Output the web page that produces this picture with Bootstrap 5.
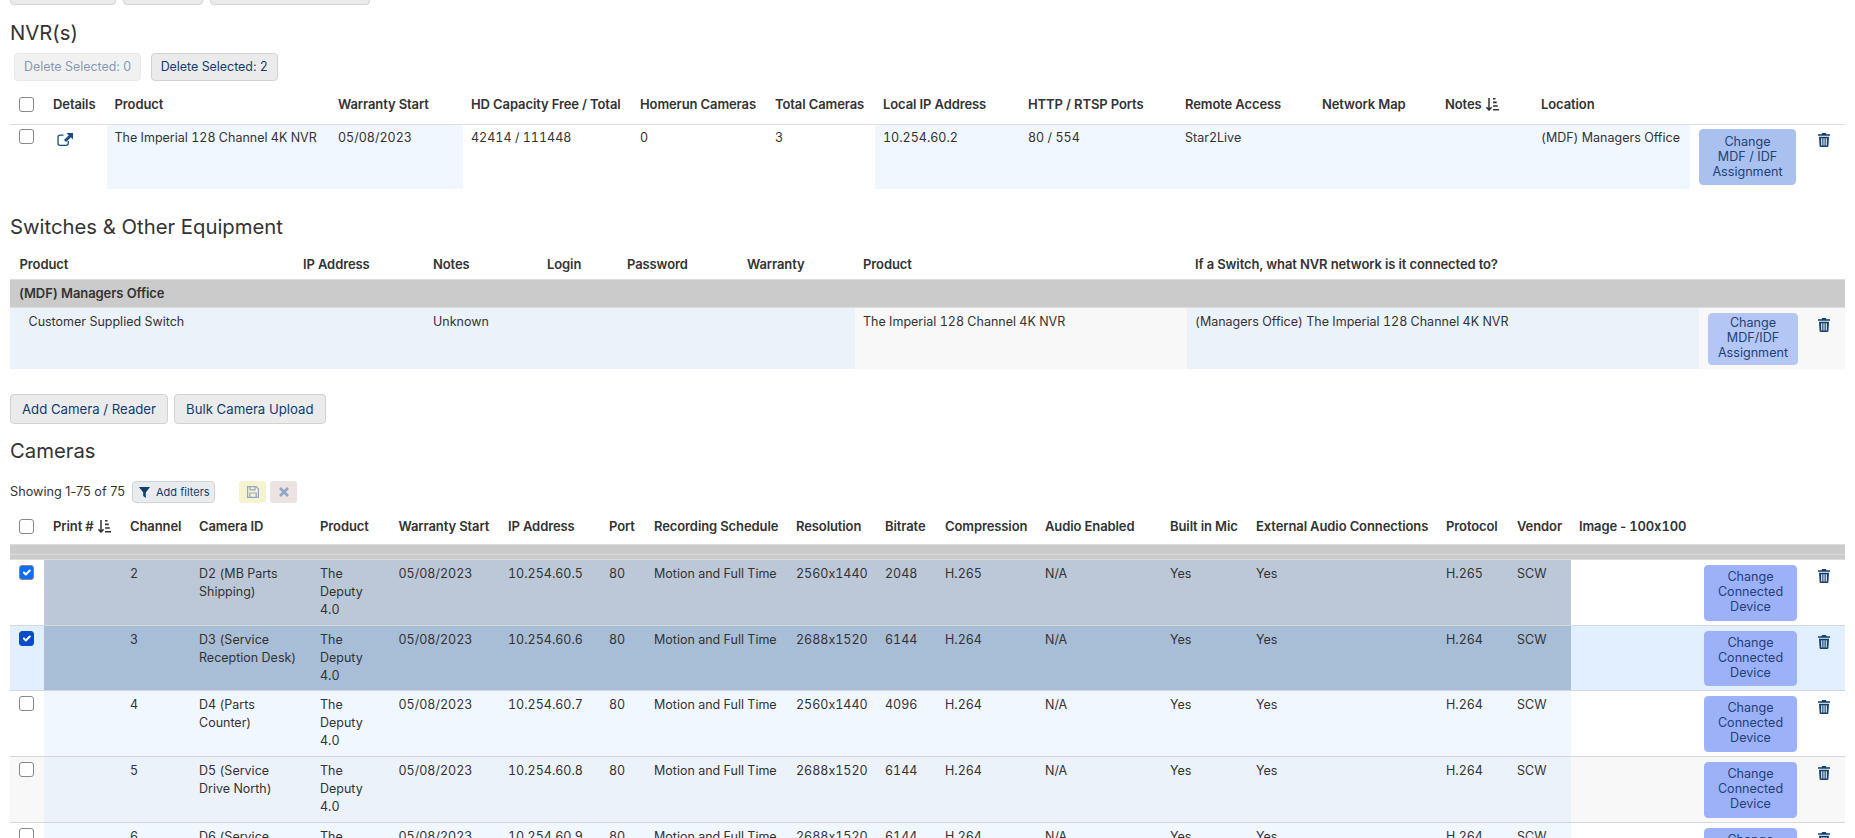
<!DOCTYPE html>
<html lang="en">
<head>
<meta charset="utf-8">
<title>Site equipment</title>
<link href="https://cdn.jsdelivr.net/npm/bootstrap@5.3.0/dist/css/bootstrap.min.css" rel="stylesheet">
<style>
html,body{height:838px;overflow:hidden;background:#fff}
body{font-family:Inter,"Liberation Sans",sans-serif;font-size:12.7px;color:#333;font-feature-settings:"calt" 0}
.page-wrap{padding:0 10px;margin-top:-25.5px}
.sec-title{font-size:20.3px;line-height:24px;font-weight:400;color:#333;margin:0}
.sec-nvr{margin-top:16.5px}
.sec-switch{margin-top:26px;margin-bottom:12px}
.sec-cam{margin-top:15px}
.top-bar{height:30px;gap:7px}
.act-btn{--bs-btn-bg:#ebebeb;--bs-btn-border-color:#d2d2d2;--bs-btn-color:#113c72;--bs-btn-hover-bg:#e2e2e2;--bs-btn-hover-color:#113c72;--bs-btn-hover-border-color:#c6c6c6;--bs-btn-disabled-bg:#ebebeb;--bs-btn-disabled-border-color:#dcdcdc;--bs-btn-disabled-color:#3f6390;--bs-btn-border-radius:4px;--bs-btn-font-size:13.2px;--bs-btn-padding-x:11px;--bs-btn-padding-y:0;--bs-btn-line-height:28px;white-space:nowrap}
.w-a{width:106px}.w-b{width:80px}.w-c{width:160px}
.del-bar{margin:8px 0 5px 4px;gap:9.5px}
.del-bar .act-btn{--bs-btn-font-size:12.4px;--bs-btn-padding-x:9px;--bs-btn-line-height:26px}
.add-bar{margin-top:25px;gap:6px}
.show-bar{margin-top:18px;margin-bottom:5px;height:22px}
.filter-btn{--bs-btn-font-size:11px;--bs-btn-line-height:20px;--bs-btn-padding-x:6px;--bs-btn-bg:#e9ecef;--bs-btn-border-color:#cfd3d8;margin-left:7px;width:83px;display:flex;align-items:center;gap:6px}
.filter-btn svg{flex:none}
.tool-sq{width:27px;height:22px;border-radius:3px;display:flex;align-items:center;justify-content:center}
.sq-save{background:#f6f3d0;margin-left:24px}
.sq-cancel{background:#eee3e3;margin-left:4px}
.eq-table{table-layout:fixed;width:1835px;margin:0;--bs-table-color:#333;--bs-table-bg:transparent;--bs-table-border-color:#d4d8dd;font-size:12.5px;line-height:18px}
.eq-table tbody{font-variant-numeric:tabular-nums}
.eq-table.table>:not(caption)>*>*{padding:5px 8px 4px;border-bottom-width:1px;vertical-align:top}
.eq-table.nvr-table.table>tbody>tr>td{padding-top:4px;padding-bottom:5px}
.eq-table.table>thead>tr>th{font-size:13px;letter-spacing:-.1px;font-weight:600;padding:0 8px 2px;vertical-align:middle;white-space:nowrap;border-bottom:1px solid #dcdcdc}
.eq-table.table>thead>tr.head-36>th{height:36px;padding-bottom:0}
.eq-table.table>thead>tr>.img-th{font-variant-numeric:tabular-nums;word-spacing:-1.5px}
.head-38 th{height:38px}
.head-28 th{height:29px}
.eq-table .form-check-input{width:15px;height:15px;margin:0 0 0 1px;display:block;border-color:#888;border-radius:3px}
.eq-table thead .form-check-input{margin-top:1px}
.chk-dark.form-check-input:checked{background-color:#0b4dc8;border-color:#0b4dc8}
.nvr-cols col:nth-child(1){width:35px}.nvr-cols col:nth-child(2){width:61.5px}.nvr-cols col:nth-child(3){width:223.5px}.nvr-cols col:nth-child(4){width:133px}.nvr-cols col:nth-child(5){width:169px}.nvr-cols col:nth-child(6){width:135px}.nvr-cols col:nth-child(7){width:108px}.nvr-cols col:nth-child(8){width:145px}.nvr-cols col:nth-child(9){width:157px}.nvr-cols col:nth-child(10){width:137px}.nvr-cols col:nth-child(11){width:123px}.nvr-cols col:nth-child(12){width:96px}.nvr-cols col:nth-child(13){width:157px}.nvr-cols col:nth-child(14){width:115px}.nvr-cols col:nth-child(15){width:40px}
.sw-cols col:nth-child(1){width:285px}.sw-cols col:nth-child(2){width:130px}.sw-cols col:nth-child(3){width:114px}.sw-cols col:nth-child(4){width:80px}.sw-cols col:nth-child(5){width:120px}.sw-cols col:nth-child(6){width:116px}.sw-cols col:nth-child(7){width:332px}.sw-cols col:nth-child(8){width:512px}.sw-cols col:nth-child(9){width:106px}.sw-cols col:nth-child(10){width:40px}
.cam-cols col:nth-child(1){width:34px}.cam-cols col:nth-child(2){width:78px}.cam-cols col:nth-child(3){width:69px}.cam-cols col:nth-child(4){width:121px}.cam-cols col:nth-child(5){width:78.5px}.cam-cols col:nth-child(6){width:109.5px}.cam-cols col:nth-child(7){width:101px}.cam-cols col:nth-child(8){width:45px}.cam-cols col:nth-child(9){width:142px}.cam-cols col:nth-child(10){width:89px}.cam-cols col:nth-child(11){width:60px}.cam-cols col:nth-child(12){width:100px}.cam-cols col:nth-child(13){width:125px}.cam-cols col:nth-child(14){width:86px}.cam-cols col:nth-child(15){width:190px}.cam-cols col:nth-child(16){width:71px}.cam-cols col:nth-child(17){width:62px}.cam-cols col:nth-child(18){width:124px}.cam-cols col:nth-child(19){width:110px}.cam-cols col:nth-child(20){width:40px}
.bg-tint{--bs-table-bg:#f1f7fe}
.bg-band{--bs-table-bg:#ebf2fa}
.bg-odd{--bs-table-bg:#f8f8f8}
.bg-sel1{--bs-table-bg:#bcc8d7}
.bg-sel2{--bs-table-bg:#a8bdd6}
.bg-hov{--bs-table-bg:#e1effe}
.bg-group{--bs-table-bg:#cbcbcb}
.eq-table.table>tbody>tr>.group-cell{font-size:13px;letter-spacing:-.1px;font-weight:600;padding:4px 8px 5px 9px;border-bottom-color:#dcdcdc}
.eq-table.table>tbody>tr>.spacer-a{padding:0;height:10px;font-size:0;line-height:0;border-bottom-color:#dcdcdc}
.eq-table.table>tbody>tr>.spacer-b{padding:0;height:5px;font-size:0;line-height:0;border-bottom-color:#dcdcdc}
.eq-table.table>tbody>.no-line>td{border-bottom-width:0}
.eq-table.table>thead>tr>.lead-th,.eq-table.table>tbody>tr>.lead-td{padding-left:9.5px}
.eq-table.table>thead>tr>.print-th{padding-left:9px}
.change-btn{--bs-btn-bg:#9db1f8;--bs-btn-border-color:#9db1f8;--bs-btn-color:#1f4278;--bs-btn-hover-bg:#8fa5f2;--bs-btn-hover-color:#1f4278;--bs-btn-hover-border-color:#8fa5f2;--bs-btn-font-size:12.6px;--bs-btn-line-height:15px;--bs-btn-border-radius:4px;padding:3px 2px 6px;display:block;width:93px;height:56px}
.change-slim{height:55px;padding-bottom:5px}
.eq-table.table>tbody>tr>.btn-cell{padding:5px 8px 4px 9px}
.eq-table.nvr-table.table>tbody>tr>.btn-cell{padding:4px 8px 4px 9px}
.change-nvr{--bs-btn-bg:#aac0ef;--bs-btn-border-color:#aac0ef;width:97px;padding:4px 2px 5px}
.change-sw{--bs-btn-bg:#b4c7f4;--bs-btn-border-color:#b4c7f4;width:90px;height:52px;padding:1px 2px 4px}
.trash-link{display:block;width:12px;margin:4.5px 0 0 5px;line-height:0}
.trash-link svg{display:block}
.sw-name{padding-left:9px}
.sort-ico{margin-left:4px;vertical-align:-2px}
.ic-details{display:block;margin:4px 0 0 4px}
</style>
</head>
<body>
<svg width="0" height="0" class="d-none">
  <symbol id="i-trash" viewBox="0 0 12 14"><path fill="#123f6d" fill-rule="evenodd" d="M4.2 0h3.6l.7 1.3H12v1.5H0V1.3h3.5zM1 3.7h10l-.6 9.2a1.2 1.2 0 0 1-1.2 1.1H2.8a1.2 1.2 0 0 1-1.2-1.1zM3.2 5.2v7.2h1.1V5.2zM5.45 5.2v7.2h1.1V5.2zM7.7 5.2v7.2h1.1V5.2z"/></symbol>
  <symbol id="i-sort" viewBox="0 0 13 13"><path fill="none" stroke="#333" stroke-width="1.5" d="M3 0v12M.4 9.3 3 12l2.6-2.7"/><path fill="#333" d="M7 0h2.5v1.6H7zM7 3.6h3.7v1.6H7zM7 7.2h4.8v1.6H7zM7 10.9h6v1.6H7z"/></symbol>
</svg>
<div class="page-wrap">
  <div class="top-bar d-flex">
    <button type="button" class="btn act-btn w-a" aria-label="Action"></button>
    <button type="button" class="btn act-btn w-b" aria-label="Action"></button>
    <button type="button" class="btn act-btn w-c" aria-label="Action"></button>
  </div>

  <h2 class="sec-title sec-nvr">NVR(s)</h2>
  <div class="del-bar d-flex">
    <button type="button" class="btn act-btn" disabled>Delete Selected: 0</button>
    <button type="button" class="btn act-btn">Delete Selected: 2</button>
  </div>
  <table class="table eq-table nvr-table">
    <colgroup class="nvr-cols"><col><col><col><col><col><col><col><col><col><col><col><col><col><col><col></colgroup>
    <thead>
      <tr class="head-38">
        <th><input class="form-check-input" type="checkbox" aria-label="Select all"></th>
        <th>Details</th><th>Product</th><th>Warranty Start</th><th>HD Capacity Free / Total</th><th>Homerun Cameras</th><th>Total Cameras</th><th>Local IP Address</th><th>HTTP / RTSP Ports</th><th>Remote Access</th><th>Network Map</th>
        <th>Notes<svg class="sort-ico" width="13" height="13"><use href="#i-sort"/></svg></th>
        <th>Location</th><th></th><th></th>
      </tr>
    </thead>
    <tbody>
      <tr class="no-line">
        <td><input class="form-check-input" type="checkbox" aria-label="Select"></td>
        <td><svg class="ic-details" width="16" height="13" viewBox="0 0 16 13"><path fill="none" stroke="#174a85" stroke-width="1.3" d="M6.5 2.2H3A2 2 0 0 0 1 4.2v6.1a2 2 0 0 0 2 2h6.2a2 2 0 0 0 2-2V8"/><path fill="#174a85" d="M9.5 0H16v6.5l-2.2-2.2-4.8 4.8-2-2 4.8-4.8z"/></svg></td>
        <td class="bg-tint">The Imperial 128 Channel 4K NVR</td>
        <td class="bg-tint">05/08/2023</td>
        <td>42414 / 111448</td>
        <td>0</td>
        <td>3</td>
        <td class="bg-tint">10.254.60.2</td>
        <td class="bg-tint">80 / 554</td>
        <td class="bg-tint">Star2Live</td>
        <td class="bg-tint"></td>
        <td class="bg-tint"></td>
        <td class="bg-tint">(MDF) Managers Office</td>
        <td class="btn-cell"><button type="button" class="btn change-btn change-nvr">Change<br>MDF / IDF<br>Assignment</button></td>
        <td><a class="trash-link" href="#" aria-label="Delete"><svg width="12" height="14"><use href="#i-trash"/></svg></a></td>
      </tr>
    </tbody>
  </table>

  <h2 class="sec-title sec-switch">Switches &amp; Other Equipment</h2>
  <table class="table eq-table">
    <colgroup class="sw-cols"><col><col><col><col><col><col><col><col><col><col></colgroup>
    <thead>
      <tr class="head-28">
        <th class="lead-th">Product</th><th>IP Address</th><th>Notes</th><th>Login</th><th>Password</th><th>Warranty</th><th>Product</th><th>If a Switch, what NVR network is it connected to?</th><th></th><th></th>
      </tr>
    </thead>
    <tbody>
      <tr class="bg-group"><td class="group-cell bg-group" colspan="10">(MDF) Managers Office</td></tr>
      <tr class="no-line">
        <td class="bg-band lead-td"><span class="sw-name">Customer Supplied Switch</span></td>
        <td class="bg-band"></td>
        <td class="bg-band">Unknown</td>
        <td class="bg-band"></td>
        <td class="bg-band"></td>
        <td class="bg-band"></td>
        <td class="bg-odd">The Imperial 128 Channel 4K NVR</td>
        <td class="bg-band">(Managers Office) The Imperial 128 Channel 4K NVR</td>
        <td class="btn-cell bg-odd"><button type="button" class="btn change-btn change-sw">Change<br>MDF/IDF<br>Assignment</button></td>
        <td class="bg-odd"><a class="trash-link" href="#" aria-label="Delete"><svg width="12" height="14"><use href="#i-trash"/></svg></a></td>
      </tr>
    </tbody>
  </table>

  <div class="add-bar d-flex">
    <button type="button" class="btn act-btn">Add Camera / Reader</button>
    <button type="button" class="btn act-btn">Bulk Camera Upload</button>
  </div>

  <h2 class="sec-title sec-cam">Cameras</h2>
  <div class="show-bar d-flex align-items-center">
    <span>Showing 1-75 of 75</span>
    <button type="button" class="btn act-btn filter-btn"><svg width="11" height="11" viewBox="0 0 11 11"><path fill="#123f6d" d="M0 0h11L6.8 5.4V11L4.2 9V5.4z"/></svg>Add filters</button>
    <span class="tool-sq sq-save"><svg width="12" height="12" viewBox="0 0 12 12"><path fill="none" stroke="#8fa6c4" stroke-width="1.2" d="M.6.6h8.6l2.2 2.2v8.6H.6zM3 .8v3h5v-3M2.8 11.2V7h6.4v4.2"/></svg></span>
    <span class="tool-sq sq-cancel"><svg width="10" height="10" viewBox="0 0 10 10"><path stroke="#8fa6c4" stroke-width="2.6" d="M1 1l8 8M9 1l-8 8"/></svg></span>
  </div>
  <table class="table eq-table">
    <colgroup class="cam-cols"><col><col><col><col><col><col><col><col><col><col><col><col><col><col><col><col><col><col><col><col></colgroup>
    <thead>
      <tr class="head-36">
        <th><input class="form-check-input" type="checkbox" aria-label="Select all"></th>
        <th class="print-th">Print #<svg class="sort-ico" width="13" height="13"><use href="#i-sort"/></svg></th>
        <th>Channel</th><th>Camera ID</th><th>Product</th><th>Warranty Start</th><th>IP Address</th><th>Port</th><th>Recording Schedule</th><th>Resolution</th><th>Bitrate</th><th>Compression</th><th>Audio Enabled</th><th>Built in Mic</th><th>External Audio Connections</th><th>Protocol</th><th>Vendor</th><th class="img-th">Image - 100x100</th><th></th><th></th>
      </tr>
    </thead>
    <tbody>
      <tr><td class="spacer-a bg-group" colspan="20"></td></tr>
      <tr><td class="spacer-b bg-group" colspan="20"></td></tr>

      <tr>
        <td><input class="form-check-input" type="checkbox" checked aria-label="Select"></td>
        <td class="bg-sel1"></td><td class="bg-sel1">2</td><td class="bg-sel1">D2 (MB Parts Shipping)</td><td class="bg-sel1">The Deputy 4.0</td><td class="bg-sel1">05/08/2023</td><td class="bg-sel1">10.254.60.5</td><td class="bg-sel1">80</td><td class="bg-sel1">Motion and Full Time</td><td class="bg-sel1">2560x1440</td><td class="bg-sel1">2048</td><td class="bg-sel1">H.265</td><td class="bg-sel1">N/A</td><td class="bg-sel1">Yes</td><td class="bg-sel1">Yes</td><td class="bg-sel1">H.265</td><td class="bg-sel1">SCW</td>
        <td></td>
        <td class="btn-cell"><button type="button" class="btn change-btn">Change Connected Device</button></td>
        <td><a class="trash-link" href="#" aria-label="Delete"><svg width="12" height="14"><use href="#i-trash"/></svg></a></td>
      </tr>
      <tr>
        <td class="bg-hov"><input class="form-check-input chk-dark" type="checkbox" checked aria-label="Select"></td>
        <td class="bg-sel2"></td><td class="bg-sel2">3</td><td class="bg-sel2">D3 (Service<br>Reception Desk)</td><td class="bg-sel2">The Deputy 4.0</td><td class="bg-sel2">05/08/2023</td><td class="bg-sel2">10.254.60.6</td><td class="bg-sel2">80</td><td class="bg-sel2">Motion and Full Time</td><td class="bg-sel2">2688x1520</td><td class="bg-sel2">6144</td><td class="bg-sel2">H.264</td><td class="bg-sel2">N/A</td><td class="bg-sel2">Yes</td><td class="bg-sel2">Yes</td><td class="bg-sel2">H.264</td><td class="bg-sel2">SCW</td>
        <td class="bg-hov"></td>
        <td class="btn-cell bg-hov"><button type="button" class="btn change-btn change-slim">Change Connected Device</button></td>
        <td class="bg-hov"><a class="trash-link" href="#" aria-label="Delete"><svg width="12" height="14"><use href="#i-trash"/></svg></a></td>
      </tr>
      <tr>
        <td><input class="form-check-input" type="checkbox" aria-label="Select"></td>
        <td class="bg-tint"></td><td class="bg-tint">4</td><td class="bg-tint">D4 (Parts<br>Counter)</td><td class="bg-tint">The Deputy 4.0</td><td class="bg-tint">05/08/2023</td><td class="bg-tint">10.254.60.7</td><td class="bg-tint">80</td><td class="bg-tint">Motion and Full Time</td><td class="bg-tint">2560x1440</td><td class="bg-tint">4096</td><td class="bg-tint">H.264</td><td class="bg-tint">N/A</td><td class="bg-tint">Yes</td><td class="bg-tint">Yes</td><td class="bg-tint">H.264</td><td class="bg-tint">SCW</td>
        <td></td>
        <td class="btn-cell"><button type="button" class="btn change-btn">Change Connected Device</button></td>
        <td><a class="trash-link" href="#" aria-label="Delete"><svg width="12" height="14"><use href="#i-trash"/></svg></a></td>
      </tr>
      <tr>
        <td class="bg-odd"><input class="form-check-input" type="checkbox" aria-label="Select"></td>
        <td class="bg-band"></td><td class="bg-band">5</td><td class="bg-band">D5 (Service<br>Drive North)</td><td class="bg-band">The Deputy 4.0</td><td class="bg-band">05/08/2023</td><td class="bg-band">10.254.60.8</td><td class="bg-band">80</td><td class="bg-band">Motion and Full Time</td><td class="bg-band">2688x1520</td><td class="bg-band">6144</td><td class="bg-band">H.264</td><td class="bg-band">N/A</td><td class="bg-band">Yes</td><td class="bg-band">Yes</td><td class="bg-band">H.264</td><td class="bg-band">SCW</td>
        <td class="bg-odd"></td>
        <td class="btn-cell bg-odd"><button type="button" class="btn change-btn">Change Connected Device</button></td>
        <td class="bg-odd"><a class="trash-link" href="#" aria-label="Delete"><svg width="12" height="14"><use href="#i-trash"/></svg></a></td>
      </tr>
      <tr>
        <td><input class="form-check-input" type="checkbox" aria-label="Select"></td>
        <td class="bg-tint"></td><td class="bg-tint">6</td><td class="bg-tint">D6 (Service<br>Drive South)</td><td class="bg-tint">The Deputy 4.0</td><td class="bg-tint">05/08/2023</td><td class="bg-tint">10.254.60.9</td><td class="bg-tint">80</td><td class="bg-tint">Motion and Full Time</td><td class="bg-tint">2688x1520</td><td class="bg-tint">6144</td><td class="bg-tint">H.264</td><td class="bg-tint">N/A</td><td class="bg-tint">Yes</td><td class="bg-tint">Yes</td><td class="bg-tint">H.264</td><td class="bg-tint">SCW</td>
        <td></td>
        <td class="btn-cell"><button type="button" class="btn change-btn">Change Connected Device</button></td>
        <td><a class="trash-link" href="#" aria-label="Delete"><svg width="12" height="14"><use href="#i-trash"/></svg></a></td>
      </tr>
    </tbody>
  </table>
</div>
<script src="https://cdn.jsdelivr.net/npm/bootstrap@5.3.0/dist/js/bootstrap.bundle.min.js"></script>
</body>
</html>
